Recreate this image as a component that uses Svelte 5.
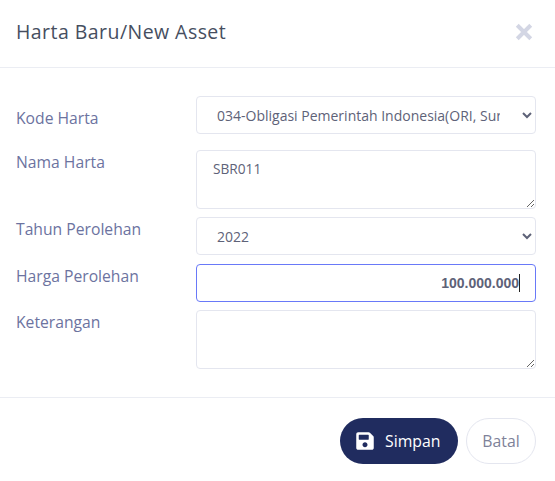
<script>
	const kode = '034-Obligasi Pemerintah Indonesia(ORI, Surat Berharga Negara)';
</script>

<div class="modal">
	<header class="modal-header">
		<h5>Harta Baru/New Asset</h5>
		<button type="button" class="close" aria-label="Close">
			<svg width="18" height="18" viewBox="0 0 16 16"><path d="M2 2l12 12M14 2L2 14" stroke="currentColor" stroke-width="3.600" fill="none" /></svg>
		</button>
	</header>

	<form class="modal-body">
		<div class="row first">
			<label for="kode">Kode Harta</label>
			<select id="kode"><option>{kode}</option></select>
		</div>
		<div class="row nama">
			<label for="nama">Nama Harta</label>
			<textarea id="nama">SBR011</textarea>
		</div>
		<div class="row tahun">
			<label for="tahun">Tahun Perolehan</label>
			<select id="tahun"><option>2022</option></select>
		</div>
		<div class="row harga">
			<label for="harga">Harga Perolehan</label>
			<div class="input-wrap">
				<input id="harga" type="text" value="100.000.000" />
				<span class="caret"></span>
			</div>
		</div>
		<div class="row ket">
			<label for="ket">Keterangan</label>
			<textarea id="ket"></textarea>
		</div>
	</form>

	<footer class="modal-footer">
		<button type="button" class="btn primary">
			<svg width="18" height="20" viewBox="0 0 448 512"><path fill="currentColor" d="M433.900 129.900l-83.900-83.900A48 48 0 0 0 316.100 32H48C21.500 32 0 53.500 0 80v352c0 26.500 21.500 48 48 48h352c26.500 0 48-21.500 48-48V163.900a48 48 0 0 0-14.100-34zM224 416c-35.300 0-64-28.700-64-64s28.700-64 64-64 64 28.700 64 64-28.700 64-64 64zm96-304.500V212c0 6.600-5.400 12-12 12H76c-6.600 0-12-5.400-12-12V108c0-6.600 5.400-12 12-12h228.500c3.200 0 6.200 1.300 8.500 3.500l3.500 3.500c2.200 2.200 3.500 5.300 3.500 8.500z" /></svg>
			Simpan
		</button>
		<button type="button" class="btn light">Batal</button>
	</footer>
</div>

<style>
	:global(body) {
		margin: 0;
		background: #fff;
	}
	.modal {
		width: 555px;
		height: 481px;
		overflow: hidden;
		font-family: 'Open Sans', sans-serif;
		font-size: 13px;
		color: #3f4254;
	}
	.modal-header {
		display: flex;
		align-items: center;
		justify-content: space-between;
		box-sizing: border-box;
		height: 68px;
		padding: 0 22px 4px 16px;
		border-bottom: 1px solid #ebedf3;
	}
	h5 {
		margin: 0;
		font-size: 19.500px;
		font-weight: 400;
		letter-spacing: 0.45px;
		color: #464e5f;
	}
	.close {
		display: flex;
		padding: 0;
		border: 0;
		background: none;
		color: #d3d6e4;
	}
	.modal-body {
		box-sizing: border-box;
		height: 330px;
		padding: 28px 19px 0 16px;
		border-bottom: 1px solid #ebedf3;
	}
	.row {
		display: grid;
		grid-template-columns: 180px 340px;
		align-items: start;
	}
	.nama {
		margin-top: 16px;
	}
	.tahun,
	.ket {
		margin-top: 8px;
	}
	.harga {
		margin-top: 9px;
	}
	label {
		padding-top: 1px;
		font-size: 15.700px;
		line-height: 22px;
		color: #6c739f;
	}
	.first label {
		padding-top: 11px;
	}
	select,
	textarea,
	input {
		display: block;
		width: 340px;
		margin: 0;
		box-sizing: border-box;
		border: 1px solid #e4e6ef;
		border-radius: 4px;
		background-color: #fff;
		font-family: 'Open Sans', sans-serif;
		font-size: 14px;
		color: #5e6278;
		outline: none;
	}
	select {
		height: 38px;
		padding: 0 19.500px 0 16px;
	}
	textarea {
		height: 59px;
		padding: 8px 16px;
		font-size: 13.700px;
	}
	.input-wrap {
		position: relative;
	}
	input {
		height: 38px;
		padding: 0 16px;
		border-color: #6979f8;
		text-align: right;
		font-family: 'Liberation Sans', sans-serif;
		font-size: 14px;
		font-weight: 700;
	}
	.caret {
		position: absolute;
		top: 10px;
		right: 16px;
		width: 1px;
		height: 18px;
		background: #222;
	}
	.modal-footer {
		display: flex;
		justify-content: flex-end;
		gap: 8px;
		padding: 20px 19px 0 0;
	}
	.btn {
		display: flex;
		align-items: center;
		height: 46px;
		box-sizing: border-box;
		border-radius: 23px;
		font-family: 'Open Sans', sans-serif;
		font-size: 15.800px;
		font-weight: 500;
	}
	.primary {
		gap: 11px;
		width: 118px;
		padding: 0 0 0 16px;
		border: 0;
		background: #202c5f;
		color: #fff;
	}
	.light {
		justify-content: center;
		width: 70px;
		padding: 0;
		border: 1px solid #e4e6ef;
		background: #fff;
		color: #7e8299;
	}
</style>
